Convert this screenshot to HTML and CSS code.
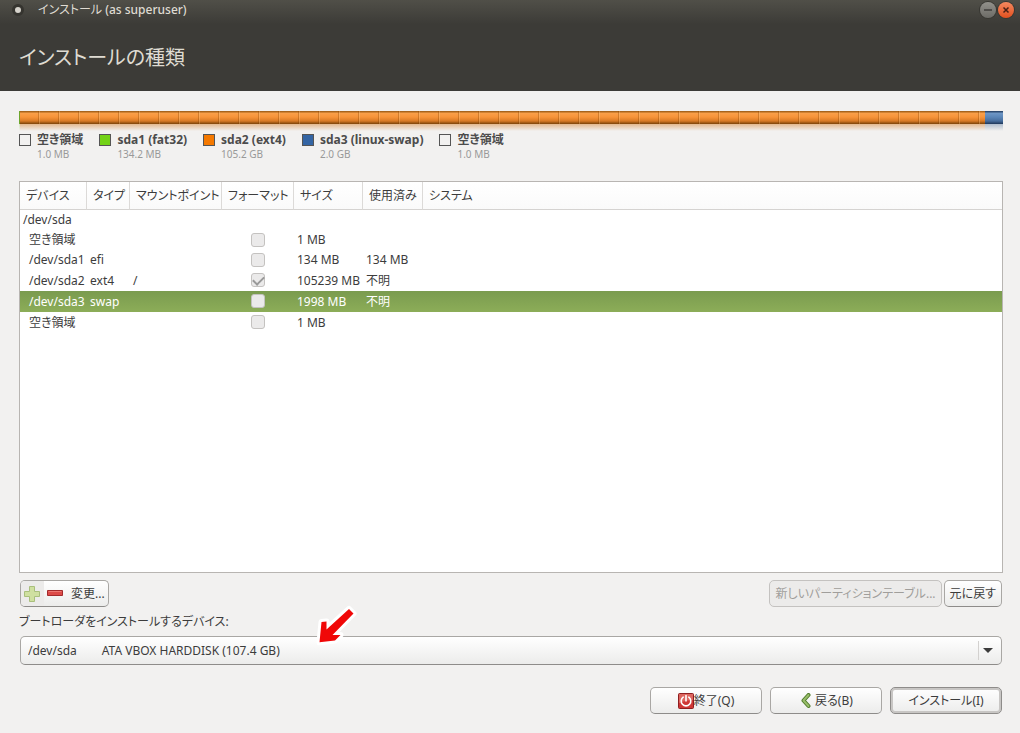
FILE: index.html
```html
<!DOCTYPE html>
<html lang="ja">
  <head>
    <meta charset="UTF-8" />
    <meta name="viewport" content="width=device-width, initial-scale=1.0" />
    <title>インストール</title>
    <link rel="stylesheet" href="styles.css">
  </head>
  <body>
    <header class="header">
      <div class="titlebar">
        <span class="window-icon"></span>
        <span class="window-title">インストール <b>(as superuser)</b></span>
        <button class="window-button" type="button" aria-label="最小化">
          <svg width="16" height="16" viewBox="0 0 16 16"><path d="M4 8h8" stroke="#3a3935" stroke-width="1.4" /></svg>
        </button>
        <button class="window-button close" type="button" aria-label="閉じる">
          <svg width="16" height="16" viewBox="0 0 16 16"><path d="M5.500 5.500l5 5M10.500 5.500l-5 5" stroke="#4a2015" stroke-width="1.500" /></svg>
        </button>
      </div>
      <h1 class="heading">インストールの種類</h1>
    </header>

    <main class="content">
      <div class="disk">
        <div class="disk-part green" style="width: 0.1%"></div>
        <div class="disk-part orange" style="width: 98.1%"></div>
        <div class="disk-part blue" style="width: 1.8%"></div>
      </div>
      <ul class="legend">
        <li><span class="swatch"></span><div><b>空き領域</b><small>1.0 MB</small></div></li>
        <li><span class="swatch green"></span><div><b>sda1 (fat32)</b><small>134.2 MB</small></div></li>
        <li><span class="swatch orange"></span><div><b>sda2 (ext4)</b><small>105.2 GB</small></div></li>
        <li><span class="swatch blue"></span><div><b>sda3 (linux-swap)</b><small>2.0 GB</small></div></li>
        <li><span class="swatch"></span><div><b>空き領域</b><small>1.0 MB</small></div></li>
      </ul>

      <div class="table-frame">
        <table class="partitions">
          <colgroup>
            <col class="c-device" />
            <col class="c-type" />
            <col class="c-mount" />
            <col class="c-format" />
            <col class="c-size" />
            <col class="c-used" />
            <col />
          </colgroup>
          <thead>
            <tr><th>デバイス</th><th>タイプ</th><th>マウントポイント</th><th>フォーマット</th><th>サイズ</th><th>使用済み</th><th>システム</th></tr>
          </thead>
          <tbody>
            <tr><td class="root">/dev/sda</td><td></td><td></td><td></td><td></td><td></td><td></td></tr>
            <tr><td>空き領域</td><td></td><td></td><td class="check"><input type="checkbox" aria-label="フォーマット" disabled /></td><td>1 MB</td><td></td><td></td></tr>
            <tr><td>/dev/sda1</td><td>efi</td><td></td><td class="check"><input type="checkbox" aria-label="フォーマット" disabled /></td><td>134 MB</td><td>134 MB</td><td></td></tr>
            <tr class="tall"><td>/dev/sda2</td><td>ext4</td><td>/</td><td class="check"><input type="checkbox" aria-label="フォーマット" checked disabled /></td><td>105239 MB</td><td>不明</td><td></td></tr>
            <tr class="tall selected"><td>/dev/sda3</td><td>swap</td><td></td><td class="check"><input type="checkbox" aria-label="フォーマット" disabled /></td><td>1998 MB</td><td>不明</td><td></td></tr>
            <tr class="tall"><td>空き領域</td><td></td><td></td><td class="check"><input type="checkbox" aria-label="フォーマット" disabled /></td><td>1 MB</td><td></td><td></td></tr>
          </tbody>
        </table>
      </div>

      <div class="toolbar">
        <div class="button-group">
          <button class="icon-button" type="button" aria-label="追加" disabled>
            <svg width="16" height="16" viewBox="0 0 16 16"><path d="M5.500 0.500h5v5h5v5h-5v5h-5v-5h-5v-5h5z" fill="#cfe0a0" stroke="#a9bf7c" /></svg>
          </button>
          <button class="icon-button" type="button" aria-label="削除">
            <svg width="16" height="16" viewBox="0 0 16 16"><path d="M0.500 4.500h15v5h-15z" fill="#dc4a48" stroke="#a32a2c" /><path d="M1.500 5.500h13" stroke="#ee7772" /></svg>
          </button>
          <button class="change-button" type="button">変更...</button>
        </div>
        <span class="spacer"></span>
        <button class="button" type="button" disabled>新しいパーティションテーブル...</button>
        <button class="button" type="button">元に戻す</button>
      </div>

      <label class="boot-label" for="boot">ブートローダをインストールするデバイス:</label>
      <div class="boot">
        <select class="boot-select" id="boot">
          <option>/dev/sda&nbsp;&nbsp;&nbsp;&nbsp;&nbsp;&nbsp;&nbsp;&nbsp;ATA VBOX HARDDISK (107.4 GB)</option>
        </select>
        <span class="boot-arrow"></span>
        <svg class="pointer" width="42" height="42" viewBox="-2 -2 42 42">
          <path d="M32 2L36.500 6.500L15.500 28H23.500L18 33.500L2.500 35.300L4.500 15L9.500 14.500V22.500Z" fill="#f00808" stroke="#fff" stroke-width="6" stroke-linejoin="round" paint-order="stroke" />
        </svg>
      </div>

      <div class="actions">
        <button class="button wide" type="button">
          <svg width="16" height="16" viewBox="0 0 16 16">
            <rect x="0.500" y="0.500" width="15" height="15" rx="1" fill="#cf3735" stroke="#8e1e20" />
            <path d="M1 1h14v6q-7 0-14 3z" fill="#e37b72" opacity="0.700" />
            <path d="M5.200 4.200a4.800 4.800 0 1 0 5.600 0M8 2.500v5.500" fill="none" stroke="#fff" stroke-width="1.600" stroke-linecap="round" />
          </svg>終了(Q)
        </button>
        <button class="button wide" type="button">
          <svg width="16" height="16" viewBox="0 0 16 16">
            <path d="M9.500 2L4.500 7.500l5 5.500" fill="none" stroke="#4f7a2b" stroke-width="4" stroke-linecap="round" stroke-linejoin="round" />
            <path d="M9.500 2L4.500 7.500l5 5.500" fill="none" stroke="#98bd69" stroke-width="2" stroke-linecap="round" stroke-linejoin="round" />
          </svg>戻る(B)
        </button>
        <button class="button wide default" type="button">インストール(I)</button>
      </div>
    </main>
  </body>
</html>
```
FILE: styles.css
```css
* {
  box-sizing: border-box;
}
body {
  margin: 0;
  min-height: 100vh;
  display: flex;
  flex-direction: column;
  background: #f2f1f0;
  color: #3c3c3c;
  font-family: "Noto Sans", "Noto Sans CJK JP", sans-serif;
  font-size: 12px;
  line-height: 16px;
  /* proportional kana */
  font-feature-settings: "palt";
}
button,
select {
  font: inherit;
  font-feature-settings: inherit;
  color: inherit;
}

/* window header */
.header {
  height: 91px;
  background: linear-gradient(#504f48, #3c3b37 24px);
  color: #dfdbd2;
}
.titlebar {
  display: flex;
  align-items: center;
  gap: 2px;
  height: 20px;
  padding: 0 6px 0 12px;
}
.window-icon {
  width: 12px;
  height: 12px;
  border: 3px solid #35342f;
  border-radius: 50%;
  background: #d6d3cc;
}
.window-title {
  flex: 1;
  padding-left: 12px;
}
.window-title b {
  font-weight: 500;
}
.window-button {
  display: flex;
  width: 16px;
  height: 16px;
  padding: 0;
  border: 0;
  border-radius: 50%;
  background: linear-gradient(#92918b, #6c6b66);
  box-shadow: 0 0 0 1px #383732;
}
.window-button.close {
  background: linear-gradient(#f4885f, #e2501f);
}
.heading {
  margin: 0;
  padding: 24px 19px 0;
  font-size: 20px;
  line-height: 28px;
  font-weight: 400;
}

.content {
  flex: 1;
  display: flex;
  flex-direction: column;
  padding: 20px 17px 19px 19px;
}

/* disk usage bar */
.disk {
  display: flex;
  height: 20px;
}
.disk-part {
  height: 20px;
}
.disk-part.green {
  background: linear-gradient(#6da52c 13px, #d5e3c3 13px, #f2f1f0);
}
.disk-part.orange {
  background:
    repeating-linear-gradient(90deg, transparent 0 18px, rgba(120, 60, 0, 0.3) 18px 19px, rgba(255, 220, 170, 0.25) 19px 20px) 0 0 / 100% 13px no-repeat,
    linear-gradient(#a8641c 0 1px, #f9a04a 2px, #f7943a 6px, #d87a26 10px, #7a4208 13px, #e3b88f 13px, #f2f1f0 20px);
}
.disk-part.blue {
  background: linear-gradient(#2d4a70 0 1px, #6f97c6 2px, #5b86b8 6px, #466c9c 10px, #1d3659 13px, #aebccd 13px, #f2f1f0 20px);
}
.legend {
  display: flex;
  gap: 16px;
  height: 50px;
  margin: 0;
  padding: 1px 0 0;
  list-style: none;
}
.legend li {
  display: flex;
  gap: 6px;
}
.legend b {
  display: block;
  color: #4c4c4c;
}
.legend small {
  display: block;
  color: #999;
  font-size: 10px;
  line-height: 12px;
}
.swatch {
  width: 12px;
  height: 12px;
  margin-top: 2px;
  border: 1px solid #555;
}
.swatch.green {
  background: #73d216;
}
.swatch.orange {
  background: #f57900;
}
.swatch.blue {
  background: #3465a4;
}

/* partition list */
.table-frame {
  flex: 1;
  border: 1px solid #b8b5b2;
  background: #fff;
}
.partitions {
  width: 100%;
  table-layout: fixed;
  border-collapse: separate;
  border-spacing: 0;
}
.c-device {
  width: 67px;
}
.c-type {
  width: 43px;
}
.c-mount {
  width: 92px;
}
.c-format {
  width: 72px;
}
.c-size {
  width: 69px;
}
.c-used {
  width: 60px;
}
.partitions th {
  height: 28px;
  padding: 0 0 0 6px;
  border-right: 1px solid #dcdad8;
  border-bottom: 1px solid #d5d3d1;
  background: linear-gradient(#fff, #fafafa);
  font-weight: 400;
  text-align: left;
  white-space: nowrap;
}
.partitions th:last-child {
  border-right: 0;
}
.partitions td {
  height: 20px;
  padding: 0 0 0 3px;
  white-space: nowrap;
}
.partitions td:first-child {
  padding-left: 9px;
}
.partitions td.root {
  padding-left: 3px;
}
.partitions .tall td {
  height: 21px;
}
.partitions .selected td {
  background: linear-gradient(#7a9b4f, #8cad58);
  color: #fff;
}
.partitions td.check {
  padding: 0 0 1px;
  text-align: center;
}
.check input {
  appearance: none;
  display: grid;
  place-items: start center;
  width: 14px;
  height: 14px;
  margin: 0 auto;
  padding-top: 2px;
  border: 1px solid #c4c2c0;
  border-radius: 3px;
  background: #ebeaea;
}
.check input:checked::before {
  content: "";
  width: 9px;
  height: 5px;
  border: solid #999;
  border-width: 0 0 2px 2px;
  transform: rotate(-45deg);
}

/* buttons */
.toolbar {
  display: flex;
  gap: 2px;
  margin-top: 7px;
  padding: 0 1px;
}
.spacer {
  flex: 1;
}
.button,
.button-group {
  height: 27px;
  border: 1px solid #a9a7a4;
  border-bottom-color: #8e8c8a;
  border-radius: 5px;
  background: linear-gradient(#fff, #ececeb);
}
.button {
  padding: 0 5px;
}
.button:disabled {
  border-color: #c4c2c0;
  background: #ecebea;
  color: #a09e9b;
}
.button-group {
  display: flex;
  overflow: hidden;
}
.button-group button {
  display: flex;
  align-items: center;
  border: 0;
  background: none;
}
.button-group .icon-button {
  padding: 0 4px 0 3px;
}
.button-group .icon-button:disabled {
  background: #ecebea;
}
.change-button {
  padding: 0 3px 0 4px;
}

/* boot loader device */
.boot-label {
  margin-top: 7px;
}
.boot {
  position: relative;
  margin: 6px 1px 0;
}
.boot-select {
  appearance: none;
  display: block;
  width: 100%;
  height: 29px;
  padding: 0 7px;
  border: 1px solid #a9a7a4;
  border-bottom-color: #8e8c8a;
  border-radius: 5px;
  background: linear-gradient(#fff, #ececeb);
}
.boot-arrow {
  position: absolute;
  top: 5px;
  right: 0;
  width: 24px;
  height: 19px;
  border-left: 1px solid #d3d1cf;
  pointer-events: none;
}
.boot-arrow::before {
  content: "";
  display: block;
  margin: 7px 0 0 4px;
  width: 10px;
  height: 5px;
  background: #3c3c3c;
  clip-path: polygon(0 0, 100% 0, 50% 100%);
}
/* red pointer drawn over the list of devices */
.pointer {
  position: absolute;
  top: -31px;
  left: 295px;
  pointer-events: none;
}

.actions {
  display: flex;
  justify-content: flex-end;
  gap: 8px;
  margin-top: 22px;
  padding-right: 1px;
}
.wide {
  display: flex;
  align-items: center;
  justify-content: center;
  width: 112px;
}
.default {
  border-color: #8e8c8a;
  box-shadow: inset 0 0 0 2px #c8c6c4;
}
```
